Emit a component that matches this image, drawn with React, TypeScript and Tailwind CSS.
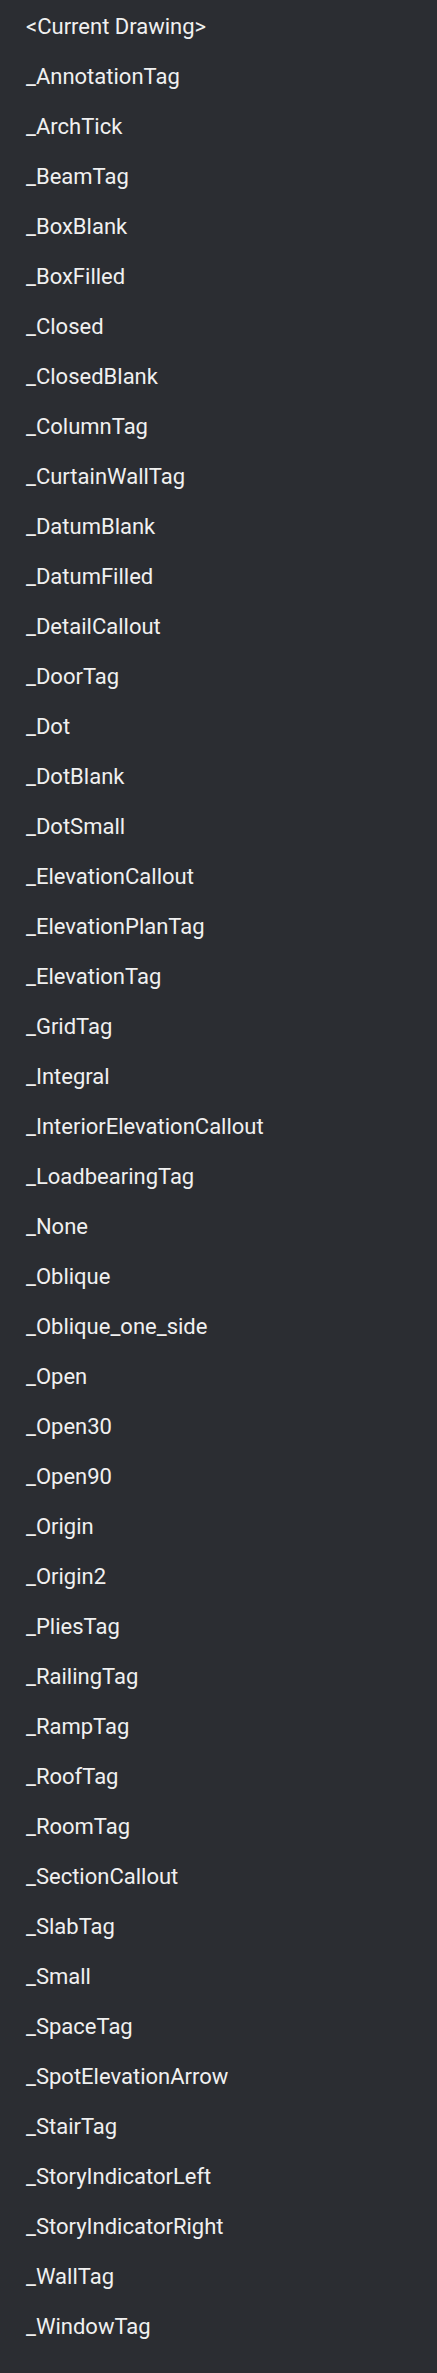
import React from "react";

const items = [
  "<Current Drawing>",
  "_AnnotationTag",
  "_ArchTick",
  "_BeamTag",
  "_BoxBlank",
  "_BoxFilled",
  "_Closed",
  "_ClosedBlank",
  "_ColumnTag",
  "_CurtainWallTag",
  "_DatumBlank",
  "_DatumFilled",
  "_DetailCallout",
  "_DoorTag",
  "_Dot",
  "_DotBlank",
  "_DotSmall",
  "_ElevationCallout",
  "_ElevationPlanTag",
  "_ElevationTag",
  "_GridTag",
  "_Integral",
  "_InteriorElevationCallout",
  "_LoadbearingTag",
  "_None",
  "_Oblique",
  "_Oblique_one_side",
  "_Open",
  "_Open30",
  "_Open90",
  "_Origin",
  "_Origin2",
  "_PliesTag",
  "_RailingTag",
  "_RampTag",
  "_RoofTag",
  "_RoomTag",
  "_SectionCallout",
  "_SlabTag",
  "_Small",
  "_SpaceTag",
  "_SpotElevationArrow",
  "_StairTag",
  "_StoryIndicatorLeft",
  "_StoryIndicatorRight",
  "_WallTag",
  "_WindowTag",
];

export default function App() {
  return (
    <div
      className="min-h-[2373px] w-full bg-[#2b2d32] pt-[2px] pb-[21px] text-[22px] text-[#f0f0f0]"
      style={{ fontFamily: "Roboto, 'Noto Sans', sans-serif" }}
    >
      <ul className="flex flex-col">
        {items.map((t) => (
          <li key={t} className="h-[50px] px-[26px] leading-[50px] whitespace-nowrap">
            {t}
          </li>
        ))}
      </ul>
    </div>
  );
}
